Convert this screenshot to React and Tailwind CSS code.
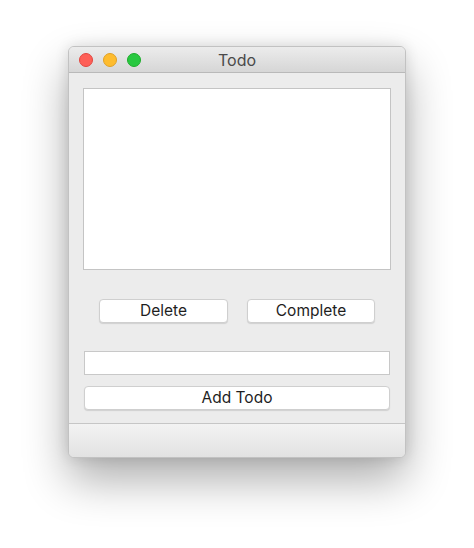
import React from "react";

function Light({ cls }) {
  return <div className={`w-[14px] h-[14px] rounded-full ${cls}`} />;
}

export default function App() {
  return (
    <div className="w-[474px] h-[548px] bg-white pt-[46px] pl-[68px] font-['Inter','Roboto',sans-serif]">
      <div className="w-[338px] h-[412px] flex flex-col rounded-[6px] border border-[#c2c2c2] bg-[#ececec] shadow-[0_22px_45px_rgba(0,0,0,0.32),0_0_14px_rgba(0,0,0,0.12)] overflow-hidden">
        <div className="h-[26px] shrink-0 relative flex items-center px-[10px] gap-[10px] bg-gradient-to-b from-[#ececec] to-[#d6d6d6] border-b border-[#b9b9b9]">
          <Light cls="bg-[#fe5f57] border border-[#e2463f]" />
          <Light cls="bg-[#febc2e] border border-[#e0a125]" />
          <Light cls="bg-[#28c840] border border-[#1dad2b]" />
          <div className="absolute inset-0 flex items-center justify-center text-[16px] text-[#4a4a4a] pointer-events-none">
            Todo
          </div>
        </div>
        <div className="flex-1 flex flex-col px-[14px] pt-[15px]">
          <div className="h-[182px] bg-white border border-[#c4c4c4]" />
          <div className="flex justify-center gap-[19px] mt-[29px]">
            <button className="w-[129px] h-[24px] bg-white rounded-[4px] border border-[#cfcfcf] shadow-[0_1px_1px_rgba(0,0,0,0.12)] text-[15.5px] text-[#1e1e1e] leading-none">
              Delete
            </button>
            <button className="w-[128px] h-[24px] bg-white rounded-[4px] border border-[#cfcfcf] shadow-[0_1px_1px_rgba(0,0,0,0.12)] text-[15.5px] text-[#1e1e1e] leading-none">
              Complete
            </button>
          </div>
          <div className="mx-[1px] mt-[28px] h-[24px] bg-white border border-[#c8c8c8]" />
          <button className="mx-[1px] mt-[11px] h-[24px] bg-white rounded-[4px] border border-[#cfcfcf] shadow-[0_1px_1px_rgba(0,0,0,0.12)] text-[15.5px] text-[#1e1e1e] leading-none">
            Add Todo
          </button>
        </div>
        <div className="h-[34px] shrink-0 border-t border-[#c6c6c6] bg-gradient-to-b from-[#f3f3f3] to-[#e2e2e2]" />
      </div>
    </div>
  );
}
